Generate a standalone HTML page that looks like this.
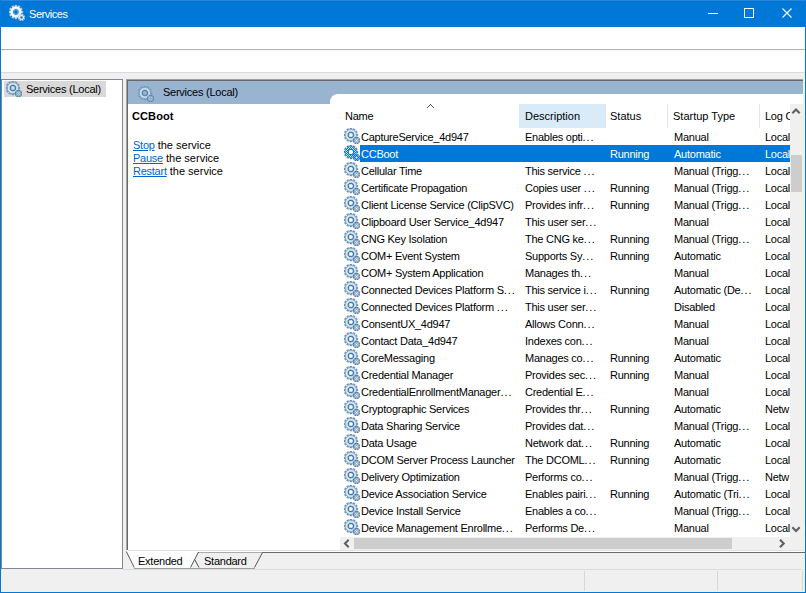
<!DOCTYPE html>
<html><head><meta charset="utf-8"><style>
*{margin:0;padding:0;box-sizing:border-box}
html,body{width:806px;height:593px;overflow:hidden;background:#f0f0f0;font-family:"Liberation Sans",sans-serif;font-size:11px;color:#000;letter-spacing:-0.25px}
.a{position:absolute}
.t{position:absolute;white-space:nowrap;line-height:13px}
#title{left:0;top:0;width:806px;height:27px;background:#0078d7;border-top:1px solid #2b88d8}
#menu{left:1px;top:27px;width:804px;height:22px;background:#fff}
#line1{left:1px;top:49px;width:804px;height:1px;background:#b4b4b4}
#tool{left:1px;top:50px;width:804px;height:23px;background:#fff;border-top:1px solid #f4f8fc;border-bottom:1px solid #dadada}
#bl{left:0;top:0;width:1px;height:593px;background:#0078d7}
#br{left:805px;top:0;width:1px;height:593px;background:#0078d7}
#bb{left:0;top:592px;width:806px;height:1px;background:#0078d7}
#tree{left:1px;top:79px;width:122px;height:490px;background:#fff;border:1px solid #828790}
#rp{left:126px;top:79px;width:677px;height:473px;background:#fff;border-top:1px solid #a0a0a0;border-left:1px solid #a0a0a0;box-shadow:inset 1px 1px 0 #696969}
#hdr{left:128px;top:81px;width:675px;height:23px;background:#99b4d1}
#tab{left:330px;top:94px;width:473px;height:20px;background:#fff;border-top-left-radius:8px}
i{font-style:normal;letter-spacing:0.95px}
.lnk{color:#0066cc;text-decoration:underline;letter-spacing:-0.25px}
.sel{background:#0078d7;color:#fff}
.vs{left:790px;top:104px;width:13px;height:433px;background:#f0f0f0}
.hs{left:340px;top:537px;width:450px;height:13px;background:#f0f0f0}
</style></head><body>
<svg width="0" height="0" style="position:absolute">
<defs>
<radialGradient id="bgr" gradientUnits="userSpaceOnUse" cx="6.9" cy="7" r="7">
<stop offset="0" stop-color="#fff" stop-opacity="0"/><stop offset="0.28" stop-color="#fff" stop-opacity="0"/><stop offset="0.31" stop-color="#46668f"/><stop offset="0.4" stop-color="#4d6f98"/><stop offset="0.5" stop-color="#a8cfe6"/><stop offset="0.6" stop-color="#d8f4fb"/><stop offset="0.7" stop-color="#bddff0"/><stop offset="0.8" stop-color="#88a8c8"/><stop offset="1" stop-color="#6686ad"/>
</radialGradient>
<radialGradient id="sgr" gradientUnits="userSpaceOnUse" cx="12.5" cy="12.5" r="3.5">
<stop offset="0" stop-color="#fff" stop-opacity="0"/><stop offset="0.25" stop-color="#fff" stop-opacity="0"/><stop offset="0.3" stop-color="#dff0f8"/><stop offset="0.55" stop-color="#a6c8e0"/><stop offset="0.8" stop-color="#5f87b4"/><stop offset="1" stop-color="#3d6390"/>
</radialGradient>
<pattern id="chk" width="2" height="2" patternUnits="userSpaceOnUse"><rect x="0" y="0" width="1" height="1" fill="#0078d7"/><rect x="1" y="1" width="1" height="1" fill="#0078d7"/></pattern>
<g id="gbase">
<path d="M5.45,1.59 L5.70,1.53 L5.95,1.48 L5.95,1.48 L5.95,0.06 L7.85,0.06 L7.85,1.48 L8.10,1.53 L8.35,1.59 L8.35,1.59 L8.59,1.66 L8.84,1.75 L8.84,1.75 L9.54,0.52 L11.19,1.47 L10.48,2.70 L10.67,2.86 L10.86,3.04 L10.86,3.04 L11.04,3.23 L11.20,3.42 L11.20,3.42 L12.43,2.71 L13.38,4.36 L12.15,5.06 L12.24,5.31 L12.31,5.55 L12.31,5.55 L12.37,5.80 L12.42,6.05 L12.42,6.05 L13.84,6.05 L13.84,7.95 L12.42,7.95 L12.37,8.20 L12.31,8.45 L12.31,8.45 L12.24,8.69 L12.15,8.94 L12.15,8.94 L13.38,9.64 L12.43,11.29 L11.20,10.58 L11.04,10.77 L10.86,10.96 L10.86,10.96 L10.67,11.14 L10.48,11.30 L10.48,11.30 L11.19,12.53 L9.54,13.48 L8.84,12.25 L8.59,12.34 L8.35,12.41 L8.35,12.41 L8.10,12.47 L7.85,12.52 L7.85,12.52 L7.85,13.94 L5.95,13.94 L5.95,12.52 L5.70,12.47 L5.45,12.41 L5.45,12.41 L5.21,12.34 L4.96,12.25 L4.96,12.25 L4.26,13.48 L2.61,12.53 L3.32,11.30 L3.13,11.14 L2.94,10.96 L2.94,10.96 L2.76,10.77 L2.60,10.58 L2.60,10.58 L1.37,11.29 L0.42,9.64 L1.65,8.94 L1.56,8.69 L1.49,8.45 L1.49,8.45 L1.43,8.20 L1.38,7.95 L1.38,7.95 L-0.04,7.95 L-0.04,6.05 L1.38,6.05 L1.43,5.80 L1.49,5.55 L1.49,5.55 L1.56,5.31 L1.65,5.06 L1.65,5.06 L0.42,4.36 L1.37,2.71 L2.60,3.42 L2.76,3.23 L2.94,3.04 L2.94,3.04 L3.13,2.86 L3.32,2.70 L3.32,2.70 L2.61,1.47 L4.26,0.52 L4.96,1.75 L5.21,1.66 L5.45,1.59ZM4.88,7.00 a2.016,2.016 0 1,0 4.03,0 a2.016,2.016 0 1,0 -4.03,0Z" fill="url(#bgr)" fill-rule="evenodd" stroke="#6a8bb2" stroke-width="0.5"/>
<path d="M12.50,9.90 L12.68,9.91 L12.86,9.93 L12.86,9.93 L13.22,9.07 L14.42,9.57 L14.06,10.42 L14.21,10.54 L14.34,10.66 L14.34,10.66 L14.46,10.79 L14.58,10.94 L14.58,10.94 L15.43,10.58 L15.93,11.78 L15.07,12.14 L15.09,12.32 L15.10,12.50 L15.10,12.50 L15.09,12.68 L15.07,12.86 L15.07,12.86 L15.93,13.22 L15.43,14.42 L14.58,14.06 L14.46,14.21 L14.34,14.34 L14.34,14.34 L14.21,14.46 L14.06,14.58 L14.06,14.58 L14.42,15.43 L13.22,15.93 L12.86,15.07 L12.68,15.09 L12.50,15.10 L12.50,15.10 L12.32,15.09 L12.14,15.07 L12.14,15.07 L11.78,15.93 L10.58,15.43 L10.94,14.58 L10.79,14.46 L10.66,14.34 L10.66,14.34 L10.54,14.21 L10.42,14.06 L10.42,14.06 L9.57,14.42 L9.07,13.22 L9.93,12.86 L9.91,12.68 L9.90,12.50 L9.90,12.50 L9.91,12.32 L9.93,12.14 L9.93,12.14 L9.07,11.78 L9.57,10.58 L10.42,10.94 L10.54,10.79 L10.66,10.66 L10.66,10.66 L10.79,10.54 L10.94,10.42 L10.94,10.42 L10.58,9.57 L11.78,9.07 L12.14,9.93 L12.32,9.91 L12.50,9.90ZM11.56,12.50 a0.9359999999999999,0.9359999999999999 0 1,0 1.87,0 a0.9359999999999999,0.9359999999999999 0 1,0 -1.87,0Z" fill="url(#sgr)" fill-rule="evenodd" stroke="#4d73a0" stroke-width="0.5"/>
</g>
<g id="g"><use href="#gbase"/></g>
<radialGradient id="tgr" gradientUnits="userSpaceOnUse" cx="6.9" cy="7" r="7">
<stop offset="0" stop-color="#fff" stop-opacity="0"/><stop offset="0.36" stop-color="#fff" stop-opacity="0"/><stop offset="0.4" stop-color="#b9b3ae"/><stop offset="0.5" stop-color="#e4f4fa"/><stop offset="0.7" stop-color="#f4fcff"/><stop offset="0.82" stop-color="#dde9f0"/><stop offset="1" stop-color="#c9d6e0"/>
</radialGradient>
<radialGradient id="tsr" gradientUnits="userSpaceOnUse" cx="12.5" cy="12.5" r="3.5">
<stop offset="0" stop-color="#fff" stop-opacity="0"/><stop offset="0.28" stop-color="#fff" stop-opacity="0"/><stop offset="0.34" stop-color="#aab4bc"/><stop offset="0.55" stop-color="#f0f8fc"/><stop offset="1" stop-color="#c4d0da"/>
</radialGradient>
<g id="gt">
<path d="M5.45,1.59 L5.70,1.53 L5.95,1.48 L5.95,1.48 L5.95,0.06 L7.85,0.06 L7.85,1.48 L8.10,1.53 L8.35,1.59 L8.35,1.59 L8.59,1.66 L8.84,1.75 L8.84,1.75 L9.54,0.52 L11.19,1.47 L10.48,2.70 L10.67,2.86 L10.86,3.04 L10.86,3.04 L11.04,3.23 L11.20,3.42 L11.20,3.42 L12.43,2.71 L13.38,4.36 L12.15,5.06 L12.24,5.31 L12.31,5.55 L12.31,5.55 L12.37,5.80 L12.42,6.05 L12.42,6.05 L13.84,6.05 L13.84,7.95 L12.42,7.95 L12.37,8.20 L12.31,8.45 L12.31,8.45 L12.24,8.69 L12.15,8.94 L12.15,8.94 L13.38,9.64 L12.43,11.29 L11.20,10.58 L11.04,10.77 L10.86,10.96 L10.86,10.96 L10.67,11.14 L10.48,11.30 L10.48,11.30 L11.19,12.53 L9.54,13.48 L8.84,12.25 L8.59,12.34 L8.35,12.41 L8.35,12.41 L8.10,12.47 L7.85,12.52 L7.85,12.52 L7.85,13.94 L5.95,13.94 L5.95,12.52 L5.70,12.47 L5.45,12.41 L5.45,12.41 L5.21,12.34 L4.96,12.25 L4.96,12.25 L4.26,13.48 L2.61,12.53 L3.32,11.30 L3.13,11.14 L2.94,10.96 L2.94,10.96 L2.76,10.77 L2.60,10.58 L2.60,10.58 L1.37,11.29 L0.42,9.64 L1.65,8.94 L1.56,8.69 L1.49,8.45 L1.49,8.45 L1.43,8.20 L1.38,7.95 L1.38,7.95 L-0.04,7.95 L-0.04,6.05 L1.38,6.05 L1.43,5.80 L1.49,5.55 L1.49,5.55 L1.56,5.31 L1.65,5.06 L1.65,5.06 L0.42,4.36 L1.37,2.71 L2.60,3.42 L2.76,3.23 L2.94,3.04 L2.94,3.04 L3.13,2.86 L3.32,2.70 L3.32,2.70 L2.61,1.47 L4.26,0.52 L4.96,1.75 L5.21,1.66 L5.45,1.59ZM4.88,7.00 a2.016,2.016 0 1,0 4.03,0 a2.016,2.016 0 1,0 -4.03,0Z" fill="url(#tgr)" fill-rule="evenodd" stroke="#aebfcf" stroke-width="0.5"/>
<path d="M12.50,9.90 L12.68,9.91 L12.86,9.93 L12.86,9.93 L13.22,9.07 L14.42,9.57 L14.06,10.42 L14.21,10.54 L14.34,10.66 L14.34,10.66 L14.46,10.79 L14.58,10.94 L14.58,10.94 L15.43,10.58 L15.93,11.78 L15.07,12.14 L15.09,12.32 L15.10,12.50 L15.10,12.50 L15.09,12.68 L15.07,12.86 L15.07,12.86 L15.93,13.22 L15.43,14.42 L14.58,14.06 L14.46,14.21 L14.34,14.34 L14.34,14.34 L14.21,14.46 L14.06,14.58 L14.06,14.58 L14.42,15.43 L13.22,15.93 L12.86,15.07 L12.68,15.09 L12.50,15.10 L12.50,15.10 L12.32,15.09 L12.14,15.07 L12.14,15.07 L11.78,15.93 L10.58,15.43 L10.94,14.58 L10.79,14.46 L10.66,14.34 L10.66,14.34 L10.54,14.21 L10.42,14.06 L10.42,14.06 L9.57,14.42 L9.07,13.22 L9.93,12.86 L9.91,12.68 L9.90,12.50 L9.90,12.50 L9.91,12.32 L9.93,12.14 L9.93,12.14 L9.07,11.78 L9.57,10.58 L10.42,10.94 L10.54,10.79 L10.66,10.66 L10.66,10.66 L10.79,10.54 L10.94,10.42 L10.94,10.42 L10.58,9.57 L11.78,9.07 L12.14,9.93 L12.32,9.91 L12.50,9.90ZM11.56,12.50 a0.9359999999999999,0.9359999999999999 0 1,0 1.87,0 a0.9359999999999999,0.9359999999999999 0 1,0 -1.87,0Z" fill="url(#tsr)" fill-rule="evenodd" stroke="#a9b9c8" stroke-width="0.5"/>
</g>
<g id="gsel"><use href="#gbase"/>
<path d="M5.42,1.49 L5.71,1.43 L6.00,1.37 L6.00,1.37 L6.00,0.06 L7.80,0.06 L7.80,1.37 L8.09,1.43 L8.38,1.49 L8.38,1.49 L8.66,1.58 L8.93,1.68 L8.93,1.68 L9.59,0.54 L11.15,1.44 L10.49,2.58 L10.72,2.77 L10.93,2.97 L10.93,2.97 L11.13,3.18 L11.32,3.41 L11.32,3.41 L12.46,2.75 L13.36,4.31 L12.22,4.97 L12.32,5.24 L12.41,5.52 L12.41,5.52 L12.47,5.81 L12.53,6.10 L12.53,6.10 L13.84,6.10 L13.84,7.90 L12.53,7.90 L12.47,8.19 L12.41,8.48 L12.41,8.48 L12.32,8.76 L12.22,9.03 L12.22,9.03 L13.36,9.69 L12.46,11.25 L11.32,10.59 L11.13,10.82 L10.93,11.03 L10.93,11.03 L10.72,11.23 L10.49,11.42 L10.49,11.42 L11.15,12.56 L9.59,13.46 L8.93,12.32 L8.66,12.42 L8.38,12.51 L8.38,12.51 L8.09,12.57 L7.80,12.63 L7.80,12.63 L7.80,13.94 L6.00,13.94 L6.00,12.63 L5.71,12.57 L5.42,12.51 L5.42,12.51 L5.14,12.42 L4.87,12.32 L4.87,12.32 L4.21,13.46 L2.65,12.56 L3.31,11.42 L3.08,11.23 L2.87,11.03 L2.87,11.03 L2.67,10.82 L2.48,10.59 L2.48,10.59 L1.34,11.25 L0.44,9.69 L1.58,9.03 L1.48,8.76 L1.39,8.48 L1.39,8.48 L1.33,8.19 L1.27,7.90 L1.27,7.90 L-0.04,7.90 L-0.04,6.10 L1.27,6.10 L1.33,5.81 L1.39,5.52 L1.39,5.52 L1.48,5.24 L1.58,4.97 L1.58,4.97 L0.44,4.31 L1.34,2.75 L2.48,3.41 L2.67,3.18 L2.87,2.97 L2.87,2.97 L3.08,2.77 L3.31,2.58 L3.31,2.58 L2.65,1.44 L4.21,0.54 L4.87,1.68 L5.14,1.58 L5.42,1.49ZM4.85,7.00 a2.052,2.052 0 1,0 4.10,0 a2.052,2.052 0 1,0 -4.10,0Z" fill="url(#chk)" fill-rule="evenodd" stroke="none" stroke-width="0"/>
<path d="M12.50,9.80 L12.73,9.81 L12.95,9.84 L12.95,9.84 L13.27,9.08 L14.37,9.54 L14.06,10.30 L14.24,10.44 L14.41,10.59 L14.41,10.59 L14.56,10.76 L14.70,10.94 L14.70,10.94 L15.46,10.63 L15.92,11.73 L15.16,12.05 L15.19,12.27 L15.20,12.50 L15.20,12.50 L15.19,12.73 L15.16,12.95 L15.16,12.95 L15.92,13.27 L15.46,14.37 L14.70,14.06 L14.56,14.24 L14.41,14.41 L14.41,14.41 L14.24,14.56 L14.06,14.70 L14.06,14.70 L14.37,15.46 L13.27,15.92 L12.95,15.16 L12.73,15.19 L12.50,15.20 L12.50,15.20 L12.27,15.19 L12.05,15.16 L12.05,15.16 L11.73,15.92 L10.63,15.46 L10.94,14.70 L10.76,14.56 L10.59,14.41 L10.59,14.41 L10.44,14.24 L10.30,14.06 L10.30,14.06 L9.54,14.37 L9.08,13.27 L9.84,12.95 L9.81,12.73 L9.80,12.50 L9.80,12.50 L9.81,12.27 L9.84,12.05 L9.84,12.05 L9.08,11.73 L9.54,10.63 L10.30,10.94 L10.44,10.76 L10.59,10.59 L10.59,10.59 L10.76,10.44 L10.94,10.30 L10.94,10.30 L10.63,9.54 L11.73,9.08 L12.05,9.84 L12.27,9.81 L12.50,9.80ZM11.53,12.50 a0.972,0.972 0 1,0 1.94,0 a0.972,0.972 0 1,0 -1.94,0Z" fill="url(#chk)" fill-rule="evenodd" stroke="none" stroke-width="0"/>
<circle cx="6.9" cy="7" r="2" fill="#fff"/>
</g>
</defs></svg>
<div id="title" class="a"></div>
<div class="t" style="left:29px;top:8px;color:#fff;letter-spacing:-0.45px">Services</div>
<div class="a" style="left:708px;top:13px;width:10px;height:1px;background:#fff"></div>
<div class="a" style="left:744px;top:8px;width:10px;height:10px;border:1px solid #fff"></div>
<svg class="a" style="left:782px;top:8px" width="10" height="10"><path d="M0.5,0.5 L9.5,9.5 M9.5,0.5 L0.5,9.5" stroke="#fff" stroke-width="1.1"/></svg>
<svg class="a" style="left:9px;top:5px" width="16" height="16"><use href="#gt"/></svg>
<div id="menu" class="a"></div><div id="line1" class="a"></div><div id="tool" class="a"></div>
<div id="tree" class="a"></div>
<div class="a" style="left:4px;top:81px;width:102px;height:16px;background:#d9d9d9"></div>
<svg class="a" style="left:6px;top:81px" width="16" height="16"><use href="#g"/></svg>
<div class="t" style="left:26px;top:83px">Services (Local)</div>
<div id="rp" class="a"></div>
<div id="hdr" class="a"></div>
<svg class="a" style="left:138px;top:86px;opacity:0.8" width="16" height="16"><use href="#g"/></svg>
<div class="t" style="left:163px;top:86px">Services (Local)</div>
<div id="tab" class="a"></div>
<div class="t" style="left:132px;top:110px;font-weight:bold;letter-spacing:0.1px">CCBoot</div>
<div class="t" style="left:133px;top:139px;letter-spacing:0px"><span class="lnk">Stop</span> the service</div>
<div class="t" style="left:133px;top:152px;letter-spacing:0px"><span class="lnk">Pause</span> the service</div>
<div class="t" style="left:133px;top:165px;letter-spacing:0px"><span class="lnk">Restart</span> the service</div>
<div class="a" style="left:519px;top:104px;width:86px;height:24px;background:#d9ebf9"></div>
<div class="a" style="left:605px;top:104px;width:1px;height:24px;background:#e5e5e5"></div>
<div class="a" style="left:667px;top:104px;width:1px;height:24px;background:#e5e5e5"></div>
<div class="a" style="left:759px;top:104px;width:1px;height:24px;background:#e5e5e5"></div>
<div class="t" style="left:345px;top:110px">Name</div>
<div class="t" style="left:525px;top:110px;letter-spacing:0">Description</div>
<div class="t" style="left:610px;top:110px;letter-spacing:0">Status</div>
<div class="t" style="left:673px;top:110px;letter-spacing:0">Startup Type</div>
<div class="t" style="left:765px;top:110px;width:25px;overflow:hidden">Log On As</div>
<svg class="a" style="left:426px;top:103px" width="9" height="6"><path d="M1,5 h1 v-1 h1 v-1 h1 v-1 h1 v1 h1 v1 h1 v1 h1 v-1 h-1 v-1 h-1 v-1 h-1 v-1 h-1 v1 h-1 v1 h-1 v1 h-1 z" fill="#555"/></svg>
<svg class="a" style="left:344px;top:128px" width="16" height="16"><use href="#g"/></svg>
<div class="t" style="left:361px;top:131px;">CaptureService_4d947</div>
<div class="t" style="left:525px;top:131px;">Enables opti<i>...</i></div>
<div class="t" style="left:674px;top:131px;">Manual</div>
<div class="t" style="left:765px;top:131px;width:25px;overflow:hidden;">Local</div>
<div class="a sel" style="left:360px;top:145px;width:430px;height:17px"></div>
<svg class="a" style="left:344px;top:145px" width="16" height="16"><use href="#gsel"/></svg>
<div class="t" style="left:361px;top:148px;color:#fff;">CCBoot</div>
<div class="t" style="left:610px;top:148px;color:#fff;">Running</div>
<div class="t" style="left:674px;top:148px;color:#fff;">Automatic</div>
<div class="t" style="left:765px;top:148px;width:25px;overflow:hidden;color:#fff;">Local</div>
<svg class="a" style="left:344px;top:162px" width="16" height="16"><use href="#g"/></svg>
<div class="t" style="left:361px;top:165px;">Cellular Time</div>
<div class="t" style="left:525px;top:165px;">This service <i>...</i></div>
<div class="t" style="left:674px;top:165px;">Manual (Trigg<i>...</i></div>
<div class="t" style="left:765px;top:165px;width:25px;overflow:hidden;">Local</div>
<svg class="a" style="left:344px;top:179px" width="16" height="16"><use href="#g"/></svg>
<div class="t" style="left:361px;top:182px;">Certificate Propagation</div>
<div class="t" style="left:525px;top:182px;">Copies user <i>...</i></div>
<div class="t" style="left:610px;top:182px;">Running</div>
<div class="t" style="left:674px;top:182px;">Manual (Trigg<i>...</i></div>
<div class="t" style="left:765px;top:182px;width:25px;overflow:hidden;">Local</div>
<svg class="a" style="left:344px;top:196px" width="16" height="16"><use href="#g"/></svg>
<div class="t" style="left:361px;top:199px;">Client License Service (ClipSVC)</div>
<div class="t" style="left:525px;top:199px;">Provides infr<i>...</i></div>
<div class="t" style="left:610px;top:199px;">Running</div>
<div class="t" style="left:674px;top:199px;">Manual (Trigg<i>...</i></div>
<div class="t" style="left:765px;top:199px;width:25px;overflow:hidden;">Local</div>
<svg class="a" style="left:344px;top:213px" width="16" height="16"><use href="#g"/></svg>
<div class="t" style="left:361px;top:216px;">Clipboard User Service_4d947</div>
<div class="t" style="left:525px;top:216px;">This user ser<i>...</i></div>
<div class="t" style="left:674px;top:216px;">Manual</div>
<div class="t" style="left:765px;top:216px;width:25px;overflow:hidden;">Local</div>
<svg class="a" style="left:344px;top:230px" width="16" height="16"><use href="#g"/></svg>
<div class="t" style="left:361px;top:233px;">CNG Key Isolation</div>
<div class="t" style="left:525px;top:233px;">The CNG ke<i>...</i></div>
<div class="t" style="left:610px;top:233px;">Running</div>
<div class="t" style="left:674px;top:233px;">Manual (Trigg<i>...</i></div>
<div class="t" style="left:765px;top:233px;width:25px;overflow:hidden;">Local</div>
<svg class="a" style="left:344px;top:247px" width="16" height="16"><use href="#g"/></svg>
<div class="t" style="left:361px;top:250px;">COM+ Event System</div>
<div class="t" style="left:525px;top:250px;">Supports Sy<i>...</i></div>
<div class="t" style="left:610px;top:250px;">Running</div>
<div class="t" style="left:674px;top:250px;">Automatic</div>
<div class="t" style="left:765px;top:250px;width:25px;overflow:hidden;">Local</div>
<svg class="a" style="left:344px;top:264px" width="16" height="16"><use href="#g"/></svg>
<div class="t" style="left:361px;top:267px;">COM+ System Application</div>
<div class="t" style="left:525px;top:267px;">Manages th<i>...</i></div>
<div class="t" style="left:674px;top:267px;">Manual</div>
<div class="t" style="left:765px;top:267px;width:25px;overflow:hidden;">Local</div>
<svg class="a" style="left:344px;top:281px" width="16" height="16"><use href="#g"/></svg>
<div class="t" style="left:361px;top:284px;">Connected Devices Platform S<i>...</i></div>
<div class="t" style="left:525px;top:284px;">This service i<i>...</i></div>
<div class="t" style="left:610px;top:284px;">Running</div>
<div class="t" style="left:674px;top:284px;">Automatic (De<i>...</i></div>
<div class="t" style="left:765px;top:284px;width:25px;overflow:hidden;">Local</div>
<svg class="a" style="left:344px;top:298px" width="16" height="16"><use href="#g"/></svg>
<div class="t" style="left:361px;top:301px;">Connected Devices Platform <i>...</i></div>
<div class="t" style="left:525px;top:301px;">This user ser<i>...</i></div>
<div class="t" style="left:674px;top:301px;">Disabled</div>
<div class="t" style="left:765px;top:301px;width:25px;overflow:hidden;">Local</div>
<svg class="a" style="left:344px;top:315px" width="16" height="16"><use href="#g"/></svg>
<div class="t" style="left:361px;top:318px;">ConsentUX_4d947</div>
<div class="t" style="left:525px;top:318px;">Allows Conn<i>...</i></div>
<div class="t" style="left:674px;top:318px;">Manual</div>
<div class="t" style="left:765px;top:318px;width:25px;overflow:hidden;">Local</div>
<svg class="a" style="left:344px;top:332px" width="16" height="16"><use href="#g"/></svg>
<div class="t" style="left:361px;top:335px;">Contact Data_4d947</div>
<div class="t" style="left:525px;top:335px;">Indexes con<i>...</i></div>
<div class="t" style="left:674px;top:335px;">Manual</div>
<div class="t" style="left:765px;top:335px;width:25px;overflow:hidden;">Local</div>
<svg class="a" style="left:344px;top:349px" width="16" height="16"><use href="#g"/></svg>
<div class="t" style="left:361px;top:352px;">CoreMessaging</div>
<div class="t" style="left:525px;top:352px;">Manages co<i>...</i></div>
<div class="t" style="left:610px;top:352px;">Running</div>
<div class="t" style="left:674px;top:352px;">Automatic</div>
<div class="t" style="left:765px;top:352px;width:25px;overflow:hidden;">Local</div>
<svg class="a" style="left:344px;top:366px" width="16" height="16"><use href="#g"/></svg>
<div class="t" style="left:361px;top:369px;">Credential Manager</div>
<div class="t" style="left:525px;top:369px;">Provides sec<i>...</i></div>
<div class="t" style="left:610px;top:369px;">Running</div>
<div class="t" style="left:674px;top:369px;">Manual</div>
<div class="t" style="left:765px;top:369px;width:25px;overflow:hidden;">Local</div>
<svg class="a" style="left:344px;top:383px" width="16" height="16"><use href="#g"/></svg>
<div class="t" style="left:361px;top:386px;">CredentialEnrollmentManager<i>...</i></div>
<div class="t" style="left:525px;top:386px;">Credential E<i>...</i></div>
<div class="t" style="left:674px;top:386px;">Manual</div>
<div class="t" style="left:765px;top:386px;width:25px;overflow:hidden;">Local</div>
<svg class="a" style="left:344px;top:400px" width="16" height="16"><use href="#g"/></svg>
<div class="t" style="left:361px;top:403px;">Cryptographic Services</div>
<div class="t" style="left:525px;top:403px;">Provides thr<i>...</i></div>
<div class="t" style="left:610px;top:403px;">Running</div>
<div class="t" style="left:674px;top:403px;">Automatic</div>
<div class="t" style="left:765px;top:403px;width:25px;overflow:hidden;">Netw</div>
<svg class="a" style="left:344px;top:417px" width="16" height="16"><use href="#g"/></svg>
<div class="t" style="left:361px;top:420px;">Data Sharing Service</div>
<div class="t" style="left:525px;top:420px;">Provides dat<i>...</i></div>
<div class="t" style="left:674px;top:420px;">Manual (Trigg<i>...</i></div>
<div class="t" style="left:765px;top:420px;width:25px;overflow:hidden;">Local</div>
<svg class="a" style="left:344px;top:434px" width="16" height="16"><use href="#g"/></svg>
<div class="t" style="left:361px;top:437px;">Data Usage</div>
<div class="t" style="left:525px;top:437px;">Network dat<i>...</i></div>
<div class="t" style="left:610px;top:437px;">Running</div>
<div class="t" style="left:674px;top:437px;">Automatic</div>
<div class="t" style="left:765px;top:437px;width:25px;overflow:hidden;">Local</div>
<svg class="a" style="left:344px;top:451px" width="16" height="16"><use href="#g"/></svg>
<div class="t" style="left:361px;top:454px;">DCOM Server Process Launcher</div>
<div class="t" style="left:525px;top:454px;">The DCOML<i>...</i></div>
<div class="t" style="left:610px;top:454px;">Running</div>
<div class="t" style="left:674px;top:454px;">Automatic</div>
<div class="t" style="left:765px;top:454px;width:25px;overflow:hidden;">Local</div>
<svg class="a" style="left:344px;top:468px" width="16" height="16"><use href="#g"/></svg>
<div class="t" style="left:361px;top:471px;">Delivery Optimization</div>
<div class="t" style="left:525px;top:471px;">Performs co<i>...</i></div>
<div class="t" style="left:674px;top:471px;">Manual (Trigg<i>...</i></div>
<div class="t" style="left:765px;top:471px;width:25px;overflow:hidden;">Netw</div>
<svg class="a" style="left:344px;top:485px" width="16" height="16"><use href="#g"/></svg>
<div class="t" style="left:361px;top:488px;">Device Association Service</div>
<div class="t" style="left:525px;top:488px;">Enables pairi<i>...</i></div>
<div class="t" style="left:610px;top:488px;">Running</div>
<div class="t" style="left:674px;top:488px;">Automatic (Tri<i>...</i></div>
<div class="t" style="left:765px;top:488px;width:25px;overflow:hidden;">Local</div>
<svg class="a" style="left:344px;top:502px" width="16" height="16"><use href="#g"/></svg>
<div class="t" style="left:361px;top:505px;">Device Install Service</div>
<div class="t" style="left:525px;top:505px;">Enables a co<i>...</i></div>
<div class="t" style="left:674px;top:505px;">Manual (Trigg<i>...</i></div>
<div class="t" style="left:765px;top:505px;width:25px;overflow:hidden;">Local</div>
<svg class="a" style="left:344px;top:519px" width="16" height="16"><use href="#g"/></svg>
<div class="t" style="left:361px;top:522px;">Device Management Enrollme<i>...</i></div>
<div class="t" style="left:525px;top:522px;">Performs De<i>...</i></div>
<div class="t" style="left:674px;top:522px;">Manual</div>
<div class="t" style="left:765px;top:522px;width:25px;overflow:hidden;">Local</div>
<div class="a vs"></div>
<div class="a" style="left:791px;top:155px;width:11px;height:37px;background:#cdcdcd"></div>
<svg class="a" style="left:790px;top:104px" width="13" height="14"><path d="M2.3,9.3 L6,5.6 L9.7,9.3" fill="none" stroke="#606060" stroke-width="2.1"/></svg>
<svg class="a" style="left:790px;top:522px" width="13" height="14"><path d="M2.3,5.3 L6,9 L9.7,5.3" fill="none" stroke="#606060" stroke-width="2.1"/></svg>
<div class="a hs"></div>
<div class="a" style="left:354px;top:538px;width:378px;height:11px;background:#cdcdcd"></div>
<svg class="a" style="left:340px;top:537px" width="13" height="13"><path d="M8.7,2.8 L5,6.5 L8.7,10.2" fill="none" stroke="#606060" stroke-width="2.1"/></svg>
<svg class="a" style="left:776px;top:537px" width="13" height="13"><path d="M4,2.8 L7.7,6.5 L4,10.2" fill="none" stroke="#606060" stroke-width="2.1"/></svg>
<div class="a" style="left:790px;top:537px;width:13px;height:13px;background:#f0f0f0"></div>
<div class="a" style="left:124px;top:550px;width:681px;height:19px;background:#f0f0f0"></div>
<div class="a" style="left:128px;top:550px;width:675px;height:1px;background:#e3e3e3"></div>
<div class="a" style="left:128px;top:551px;width:675px;height:1px;background:#fff"></div>
<div class="a" style="left:198px;top:552px;width:607px;height:1px;background:#696969"></div>
<div class="a" style="left:134px;top:568px;width:121px;height:1px;background:#a0a0a0"></div>
<div class="a" style="left:123px;top:569px;width:680px;height:1px;background:#dcdcdc"></div>
<svg class="a" style="left:0;top:0" width="806" height="593"><path d="M126,551 L134.5,568 L199,568 L194.5,559 L198.5,551 Z" fill="#fff"/><path d="M198.5,552.5 L262.5,552.5 L254.5,568 L190.5,568 Z" fill="#f0f0f0"/><path d="M126.3,551.5 L134.3,567.5" stroke="#555" stroke-width="1" fill="none"/><path d="M190.5,567.5 L198.5,552" stroke="#555" stroke-width="1" fill="none"/><path d="M194.7,559.5 L199,567.5" stroke="#555" stroke-width="1" fill="none"/><path d="M262.5,552.5 L254.5,567.5" stroke="#555" stroke-width="1" fill="none"/></svg>
<div class="t" style="left:138px;top:555px">Extended</div>
<div class="t" style="left:204px;top:555px">Standard</div>
<div class="a" style="left:584px;top:571px;width:1px;height:20px;background:#d7d7d7"></div>
<div class="a" style="left:717px;top:571px;width:1px;height:20px;background:#d7d7d7"></div>
<div class="a" style="left:802px;top:571px;width:1px;height:20px;background:#d7d7d7"></div>
<div id="bl" class="a"></div><div id="br" class="a"></div><div id="bb" class="a"></div>
</body></html>
